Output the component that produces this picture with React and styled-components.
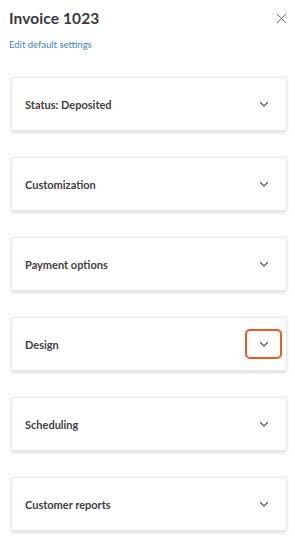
import React from 'react';
import styled, { createGlobalStyle } from 'styled-components';

const GlobalStyle = createGlobalStyle`
  html, body {
    margin: 0;
    padding: 0;
    background: #ffffff;
  }
  body {
    font-family: Lato, "Noto Sans", sans-serif;
    color: #393a3d;
  }
`;

const Panel = styled.div`
  width: 295px;
  height: 540px;
  box-sizing: border-box;
  padding: 9px 8px 0 11px;
  background: #fff;
`;

const Header = styled.div`
  display: flex;
  align-items: center;
  justify-content: space-between;
  margin-left: -2px;
`;

const Title = styled.h1`
  margin: 0;
  font-size: 15.5px;
  font-weight: 700;
  color: #393a3d;
  letter-spacing: 0.1px;
`;

const Close = styled.button`
  border: none;
  background: none;
  padding: 0;
  margin-right: -1px;
  display: flex;
  color: #6b6c72;
  cursor: pointer;
`;

const EditLink = styled.a`
  display: block;
  margin: 12px 0 0 -2px;
  font-size: 9.5px;
  color: #3a83c4;
  text-decoration: none;
`;

const List = styled.div`
  display: flex;
  flex-direction: column;
  gap: 26px;
  margin-top: 27px;
  width: 276px;
`;

const Card = styled.div`
  height: 54px;
  box-sizing: border-box;
  display: flex;
  align-items: center;
  justify-content: space-between;
  padding: 0 4px 0 13px;
  border: 1px solid #e6e7e9;
  border-radius: 2px;
  box-shadow: 0 2px 3px rgba(0, 0, 0, 0.12);
  background: #fff;
`;

const Label = styled.span`
  font-size: 11px;
  font-weight: 700;
  color: #404145;
`;

const Toggle = styled.span`
  width: 37px;
  height: 30px;
  box-sizing: border-box;
  display: flex;
  align-items: center;
  justify-content: center;
  border: 2px solid ${p => (p.highlight ? '#ef5a24' : 'transparent')};
  border-radius: 5px;
  color: #5d5e63;
`;

const Chevron = () => (
  <svg width="12" height="12" viewBox="0 0 24 24" fill="none" stroke="currentColor" strokeWidth="2.6" strokeLinecap="round" strokeLinejoin="round">
    <path d="M5 9l7 7 7-7" />
  </svg>
);

const sections = [
  'Status: Deposited',
  'Customization',
  'Payment options',
  'Design',
  'Scheduling',
  'Customer reports',
];

export default function App() {
  return (
    <>
      <GlobalStyle />
      <Panel>
        <Header>
          <Title>Invoice 1023</Title>
          <Close aria-label="close">
            <svg width="13" height="13" viewBox="0 0 24 24" fill="none" stroke="currentColor" strokeWidth="1.8" strokeLinecap="round">
              <path d="M4 4l16 16M20 4L4 20" />
            </svg>
          </Close>
        </Header>
        <EditLink href="#">Edit default settings</EditLink>
        <List>
          {sections.map(s => (
            <Card key={s}>
              <Label>{s}</Label>
              <Toggle highlight={s === 'Design'}>
                <Chevron />
              </Toggle>
            </Card>
          ))}
        </List>
      </Panel>
    </>
  );
}
